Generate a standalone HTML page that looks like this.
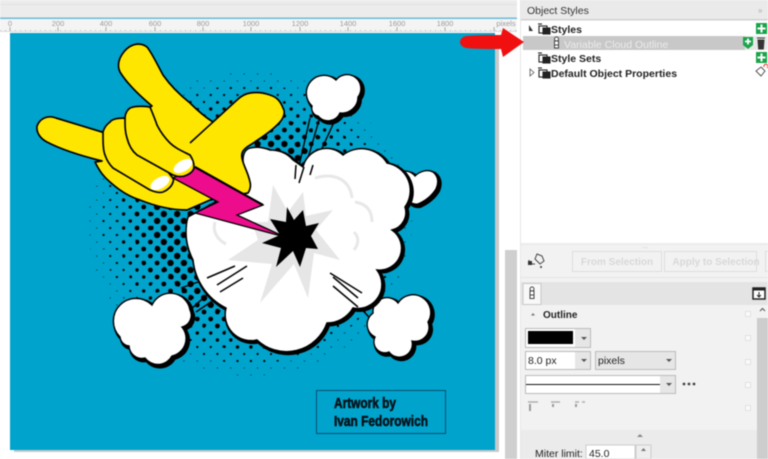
<!DOCTYPE html>
<html><head><meta charset="utf-8"><style>
html,body{margin:0;padding:0;background:#fff}
body{width:768px;height:459px;overflow:hidden;position:relative}
svg{position:absolute;left:0;top:0;filter:blur(.45px)}
text{font-family:"Liberation Sans",sans-serif}
</style></head><body>
<svg width="768" height="459" viewBox="0 0 768 459" xmlns="http://www.w3.org/2000/svg">
<defs>
<pattern id="d1" width="13.4" height="14" patternUnits="userSpaceOnUse"><circle cx="3" cy="4" r=".6" fill="#06303f"/><circle cx="9.7" cy="11" r=".6" fill="#06303f"/></pattern>
<pattern id="d2" width="13.4" height="14" patternUnits="userSpaceOnUse"><circle cx="3" cy="4" r="1.1" fill="#000"/><circle cx="9.7" cy="11" r="1.1" fill="#000"/></pattern>
<pattern id="d3" width="13.4" height="14" patternUnits="userSpaceOnUse"><circle cx="3" cy="4" r="1.7" fill="#000"/><circle cx="9.7" cy="11" r="1.7" fill="#000"/></pattern>
<pattern id="d4" width="13.4" height="14" patternUnits="userSpaceOnUse"><circle cx="3" cy="4" r="2.4" fill="#000"/><circle cx="9.7" cy="11" r="2.4" fill="#000"/></pattern>
<pattern id="d5" width="13.4" height="14" patternUnits="userSpaceOnUse"><circle cx="3" cy="4" r="3.2" fill="#000"/><circle cx="9.7" cy="11" r="3.2" fill="#000"/></pattern>
<path id="cm" d="M303 167A24 24 0 0 1 343 155A30 30 0 0 1 387 163A28 28 0 0 1 405 207A18 18 0 0 1 392 230A22 22 0 0 1 377 270A24 24 0 0 1 353 308A30 30 0 0 1 327 323A43 43 0 0 1 257 340A26 26 0 0 1 226 308A60 60 0 0 1 193 260C188 250 186 240 186 233C186 226 187 220 188 217L250 183C245 172 243 165 243 160C243 153 246 149 250 148C258 146 265 148 270 150C280 150 288 154 293 160Z"/>
<path id="c1" d="M312 106A15 15 0 0 1 336 80A13 13 0 0 1 358 97A16 16 0 0 1 340 113A13 13 0 0 1 318 116A8 8 0 0 1 312 106Z"/>
<path id="c2" d="M400 172C405 170 411 171 415 176C420 171 428 169 433 172C438 176 439 182 436 189C431 197 425 201 418 204C412 205 408 201 407 197C403 190 401 180 400 172Z"/>
<path id="c3" d="M375 337A14 14 0 0 1 373 313A14 14 0 0 1 398 303A17 17 0 0 1 428 322A14 14 0 0 1 412 341A13 13 0 0 1 389 352A11 11 0 0 1 375 337Z"/>
<path id="c4" d="M120 337A20 20 0 0 1 152 305A20 20 0 0 1 190 310A12 12 0 0 1 182 327A18 18 0 0 1 172 356A16 16 0 0 1 145 358A13 13 0 0 1 129 346A10 10 0 0 1 120 337Z"/>
</defs>

<rect width="520" height="18" fill="#ececec"/>
<rect y="4" width="520" height="1" fill="#e2e2e2"/>
<rect y="17.5" width="520" height="1.5" fill="#6fb9d8"/>
<rect y="19" width="520" height="13" fill="#f4f4f4"/>
<rect y="31" width="520" height="1" fill="#dcdcdc"/>
<g font-size="7.5" fill="#9a9a9a" text-anchor="middle">
<text x="10" y="26">0</text><text x="58" y="26">200</text><text x="106" y="26">400</text><text x="155" y="26">600</text><text x="203" y="26">800</text><text x="251" y="26">1000</text><text x="300" y="26">1200</text><text x="348" y="26">1400</text><text x="397" y="26">1600</text><text x="445" y="26">1800</text><text x="506" y="26">pixels</text>
</g>
<path d="M10 27v4M58 27v4M106 27v4M155 27v4M203 27v4M251 27v4M300 27v4M348 27v4M397 27v4M445 27v4M494 27v4" stroke="#999" stroke-width=".8"/>
<path d="M0 30.5H520" stroke="#bbb" stroke-width="1" stroke-dasharray="1 4"/>

<rect x="14" y="36" width="485" height="416" fill="#c9c9c9"/>
<rect x="10" y="33" width="485" height="417" fill="#00a3cc"/>
<rect x="505" y="250" width="12" height="209" fill="#cfcfcf"/>

<ellipse cx="250" cy="224" rx="162" ry="152" fill="url(#d1)"/>
<ellipse cx="250" cy="224" rx="148" ry="140" fill="url(#d2)"/>
<ellipse cx="250" cy="224" rx="132" ry="126" fill="url(#d3)"/>
<ellipse cx="250" cy="224" rx="116" ry="110" fill="url(#d4)"/>
<ellipse cx="250" cy="224" rx="98" ry="92" fill="url(#d5)"/>

<g stroke="#000" stroke-width="1.4" fill="none">
<path d="M310 118L299 166M319 120L304 172M335 120L312 170"/>
<path d="M181 288L215 276M190 310L220 283M196 312L224 293"/>
<path d="M363 289L388 302M360 295L380 310M358 305L376 325"/>
</g>

<g fill="#000" stroke="#000" stroke-width="4" stroke-linejoin="round">
<use href="#c1" x="2" y="2"/><use href="#c2" x="2" y="2"/><use href="#c3" x="2" y="2"/><use href="#c4" x="2" y="2"/>
</g>
<g fill="#fff" stroke="#000" stroke-width="1.4">
<use href="#c1"/><use href="#c2"/><use href="#c3"/><use href="#c4"/>
</g>

<use href="#cm" fill="#000" stroke="#000" stroke-width="4" stroke-linejoin="round" x="1.5" y="1.5"/>
<use href="#cm" fill="#fff" stroke="#000" stroke-width="1.5"/>

<polygon points="273,185 288,212 303,192 306,216 333,210 316,230 340,260 314,253 308,298 294,264 260,303 272,264 228,260 258,240 252,222 268,222" fill="#e6e6e6"/>
<g fill="none" stroke="#e8e8e8" stroke-width="3">
<path d="M315 178C335 172 350 180 352 198"/>
<path d="M355 202C368 204 372 212 372 222"/>
<path d="M354 232C360 238 358 245 354 250"/>
<path d="M215 222C212 232 218 240 226 244"/>
</g>
<g stroke="#000" stroke-width="1.5" fill="none">
<path d="M296 165L295 179M304 167L299 183M313 165L310 175"/>
<path d="M207 278L235 266M217 285L247 266M220 292L243 278"/>
<path d="M330 273L362 293M333 277L358 298M333 286L358 307"/>
</g>
<polygon points="287,207 294,220 303,210 306,226 319,223 311,236 318,249 306,248 300,267 293,251 276,267 281,248 262,243 280,235 270,219 286,222" fill="#000"/>

<path d="M102 132L56 118C48 115 40 118 37 126C36 133 41 139 47 142C62 150 82 156 102 161L95 162C100 172 104 177 110 182C120 191 130 197 140 200C155 206 172 210 187 210L210 200L248 193C250 190 251 186 250 182C248 172 243 165 242 158C241 153 243 150 247 147C258 140 272 131 280 122C285 116 285 111 283 108C280 100 276 97 270 95C262 92 256 92 250 93C244 94 240 97 237 100L213 122C205 117 197 110 190 103C180 95 170 85 163 75C158 66 152 53 147 47C143 44 140 44 137 44C130 45 124 50 120 58C118 63 118 68 120 72C128 85 140 96 152 106Z" fill="#ffe600" stroke="#000" stroke-width="1.7" stroke-linejoin="round"/>
<path d="M190 143L213 122" stroke="#000" stroke-width="1.6"/>

<polygon points="173,178 195,167 263,205 237,215 285,237 195,213 218,202" fill="#ec0c8c" stroke="#000" stroke-width="1.3" stroke-linejoin="miter"/>
<path d="M195,167L263,205" stroke="#000" stroke-width="2.2"/>

<path d="M125 118C118 118 112 119 110 122C106 125 104 128 103 132C103 142 103 150 105 155C107 161 110 165 113 168L150 190C155 192 160 193 163 192C168 190 172 186 173 182C174 180 173 178 172 177L125 118Z" fill="#ffe600" stroke="#000" stroke-width="1.7" stroke-linejoin="round"/>
<path d="M150 107C143 106 135 106 130 108C127 110 125 114 125 118C125 126 125 132 127 138C129 146 132 151 137 155L173 175C178 177 183 177 187 175C191 173 194 170 194 167C194 162 192 158 190 155C182 151 175 148 170 143C164 137 160 131 157 125C155 119 152 112 150 107Z" fill="#ffe600" stroke="#000" stroke-width="1.7" stroke-linejoin="round"/>
<ellipse cx="183" cy="166" rx="10.500" ry="5.500" transform="rotate(-30 183 166)" fill="#fff"/>
<ellipse cx="160" cy="183" rx="10.500" ry="5.500" transform="rotate(-30 160 183)" fill="#fff"/>

<rect x="316.500" y="390.500" width="129" height="43" fill="none" stroke="#0a4e72" stroke-width="1"/>
<text x="334" y="408" font-size="15" font-weight="bold" fill="#04141c" stroke="#04141c" stroke-width=".6" textLength="62" lengthAdjust="spacingAndGlyphs">Artwork by</text>
<text x="334" y="426" font-size="15" font-weight="bold" fill="#04141c" stroke="#04141c" stroke-width=".6" textLength="94" lengthAdjust="spacingAndGlyphs">Ivan Fedorowich</text>

<rect x="517" y="0" width="3" height="459" fill="#fff"/>
<rect x="520" y="0" width="1.500" height="459" fill="#e6e6e6"/>
<rect x="521" y="0" width="247" height="20" fill="#eaeaea"/>
<rect x="521" y="19" width="247" height="1.500" fill="#d2d2d2"/>
<text x="527" y="14" font-size="10.500" fill="#333">Object Styles</text>
<text x="758" y="13" font-size="8" fill="#aaa">&#187;</text>
<rect x="521" y="21" width="247" height="224" fill="#fff"/>
<rect x="523" y="36" width="222" height="14" fill="#c8c8c8"/>
<rect x="745" y="36" width="23" height="14" fill="#e8e8e8"/>
<g font-size="10.500" font-weight="bold" fill="#222">
<text x="551" y="33">Styles</text>
<text x="551" y="62">Style Sets</text>
<text x="551" y="77">Default Object Properties</text>
</g>
<text x="564" y="48" font-size="10.500" fill="#ececec">Variable Cloud Outline</text>
<polygon points="529,26 529,32 533,32" fill="#333" transform="translate(0,-1)"/>
<polygon points="530,69 530,76 534,72.500" fill="#fff" stroke="#555" stroke-width=".8"/>
<g fill="#fff" stroke="#222" stroke-width="1.100">
<g><rect x="539" y="26" width="8" height="7"/><rect x="543" y="28" width="7" height="6" fill="#222"/><path d="M538 24h4" fill="none"/></g>
<g transform="translate(0,29)"><rect x="539" y="26" width="8" height="7"/><rect x="543" y="28" width="7" height="6" fill="#222"/><path d="M538 24h4" fill="none"/></g>
<g transform="translate(0,44)"><rect x="539" y="26" width="8" height="7"/><rect x="543" y="28" width="7" height="6" fill="#222"/><path d="M538 24h4" fill="none"/></g>
</g>
<g fill="#fff" stroke="#444" stroke-width="1"><circle cx="556.500" cy="39" r="2"/><rect x="554.500" y="41" width="4" height="4"/><rect x="554.500" y="45" width="4" height="3"/></g>
<g><rect x="756" y="23" width="11" height="11" fill="#1aa34a"/><path d="M761.500 24.500v8M757.500 28.500h8" stroke="#fff" stroke-width="2"/></g>
<g><rect x="756" y="52" width="11" height="11" fill="#1aa34a"/><path d="M761.500 53.500v8M757.500 57.500h8" stroke="#fff" stroke-width="2"/></g>
<path d="M743 37h10v8l-5 4l-5-4z" fill="#1aa34a"/><path d="M748 38.500v6M745 41.500h6" stroke="#fff" stroke-width="1.800"/>
<path d="M757 38h8M758 40h6l-.7 9h-4.600z" fill="#333" stroke="#333" stroke-width="1"/>
<g fill="none" stroke="#555" stroke-width="1"><path d="M756 71l5-4l4 4l-4 5z"/></g><path d="M764 67a2 2 0 1 1 3 1" fill="none" stroke="#e33" stroke-width="1"/>

<rect x="521" y="245" width="247" height="214" fill="#f2f2f2"/>
<rect x="521" y="243" width="247" height="2" fill="#ececec"/>
<text x="645" y="248" font-size="7" fill="#bbb" text-anchor="middle">...</text>
<path d="M537 254l5 2l2 5l-4 3l-5-5zM535 264h-6v-4" fill="none" stroke="#444" stroke-width="1"/><rect x="528" y="261" width="4" height="4" fill="#333"/><circle cx="541" cy="267" r="1" fill="#333"/>
<rect x="572.500" y="251.500" width="89" height="20" fill="#f2f2f2" stroke="#ddd"/>
<rect x="664.500" y="251.500" width="92" height="20" fill="#f2f2f2" stroke="#ddd"/>
<rect x="765.500" y="251.500" width="3" height="20" fill="#f2f2f2" stroke="#ddd"/>
<g font-size="10" font-weight="bold" fill="#d8d8d8" text-anchor="middle"><text x="617" y="265">From Selection</text><text x="716" y="265">Apply to Selection</text></g>
<rect x="521" y="277" width="247" height="1" fill="#e4e4e4"/>
<rect x="521" y="282" width="247" height="23" fill="#e4e4e4"/>
<rect x="523" y="283.500" width="18" height="21" fill="#f8f8f8" stroke="#c8c8c8"/>
<g fill="#fff" stroke="#444" stroke-width="1"><circle cx="532" cy="289" r="2"/><rect x="530" y="291" width="4" height="4"/><rect x="530" y="295" width="4" height="3.500"/></g>
<rect x="753" y="288" width="12" height="11" fill="#fff" stroke="#222" stroke-width="1.500"/><rect x="753" y="288" width="12" height="2.500" fill="#222"/><path d="M759 292v5M757 295l2 2l2-2" stroke="#222" fill="none"/>
<polygon points="531,315.500 535,315.500 533,313" fill="#777"/>
<text x="543" y="318" font-size="10" font-weight="bold" fill="#222">Outline</text>
<path d="M760 311l2.500-2.500l2.500 2.500" fill="none" stroke="#555" stroke-width="1"/>
<rect x="757" y="318" width="11" height="141" fill="#cdcdcd"/>
<g fill="#fafafa" stroke="#ddd" stroke-width=".8"><rect x="745.500" y="311.500" width="5" height="5"/><rect x="745.500" y="335.500" width="5" height="5"/><rect x="745.500" y="359.500" width="5" height="5"/><rect x="745.500" y="382.500" width="5" height="5"/><rect x="745.500" y="405.500" width="5" height="5"/><rect x="745.500" y="451.500" width="5" height="5"/></g>
<rect x="525.500" y="328.500" width="65" height="19" fill="#e6e6e6" stroke="#bbb"/>
<rect x="526" y="329" width="49" height="18" fill="#fff"/>
<rect x="528" y="331" width="45" height="13" fill="#000"/>
<polygon points="581,337 587,337 584,340" fill="#555"/>
<rect x="525.500" y="351.500" width="65" height="18" fill="#e6e6e6" stroke="#bbb"/>
<rect x="526" y="352" width="49" height="17" fill="#fff"/>
<polygon points="581,359 587,359 584,362" fill="#555"/>
<text x="528" y="364" font-size="10.500" fill="#222">8.0 px</text>
<rect x="595.500" y="351.500" width="80" height="18" fill="#e6e6e6" stroke="#bbb"/>
<text x="598" y="364" font-size="10.500" fill="#222">pixels</text>
<polygon points="666,359 672,359 669,362" fill="#555"/>
<rect x="525.500" y="375.500" width="150" height="18" fill="#e6e6e6" stroke="#bbb"/>
<rect x="526" y="376" width="134" height="17" fill="#fff"/>
<path d="M526 384.500H660" stroke="#111" stroke-width="1"/>
<polygon points="666,383 672,383 669,386" fill="#555"/>
<g fill="#444"><circle cx="684" cy="384" r="1.400"/><circle cx="689" cy="384" r="1.400"/><circle cx="694" cy="384" r="1.400"/></g>
<path d="M528 402h10M551 402h9M575 402h4M582 402h3" stroke="#b0b0b0" stroke-width="1.500"/>
<path d="M530 404v7M553 404v3M576 404v3" stroke="#999" stroke-width="2"/>
<rect x="521" y="430" width="236" height="29" fill="#ebebeb"/>
<polygon points="637,437 643,437 640,434" fill="#888"/>
<text x="535" y="457" font-size="10.500" fill="#222">Miter limit:</text>
<rect x="586" y="445" width="49" height="14" fill="#fff" stroke="#ccc"/>
<text x="589" y="457" font-size="10.500" fill="#222">45.0</text>
<rect x="636" y="445" width="15" height="14" fill="#eee" stroke="#ccc"/>
<polygon points="641,451 646,451 643.500,448" fill="#777"/>

<path d="M466 36C478 35 490 35 501 35L503 28L524 42L503 57L501 49C490 49 475 49 466 48C458 46 458 38 466 36Z" fill="#f01010"/>
</svg>
</body></html>
